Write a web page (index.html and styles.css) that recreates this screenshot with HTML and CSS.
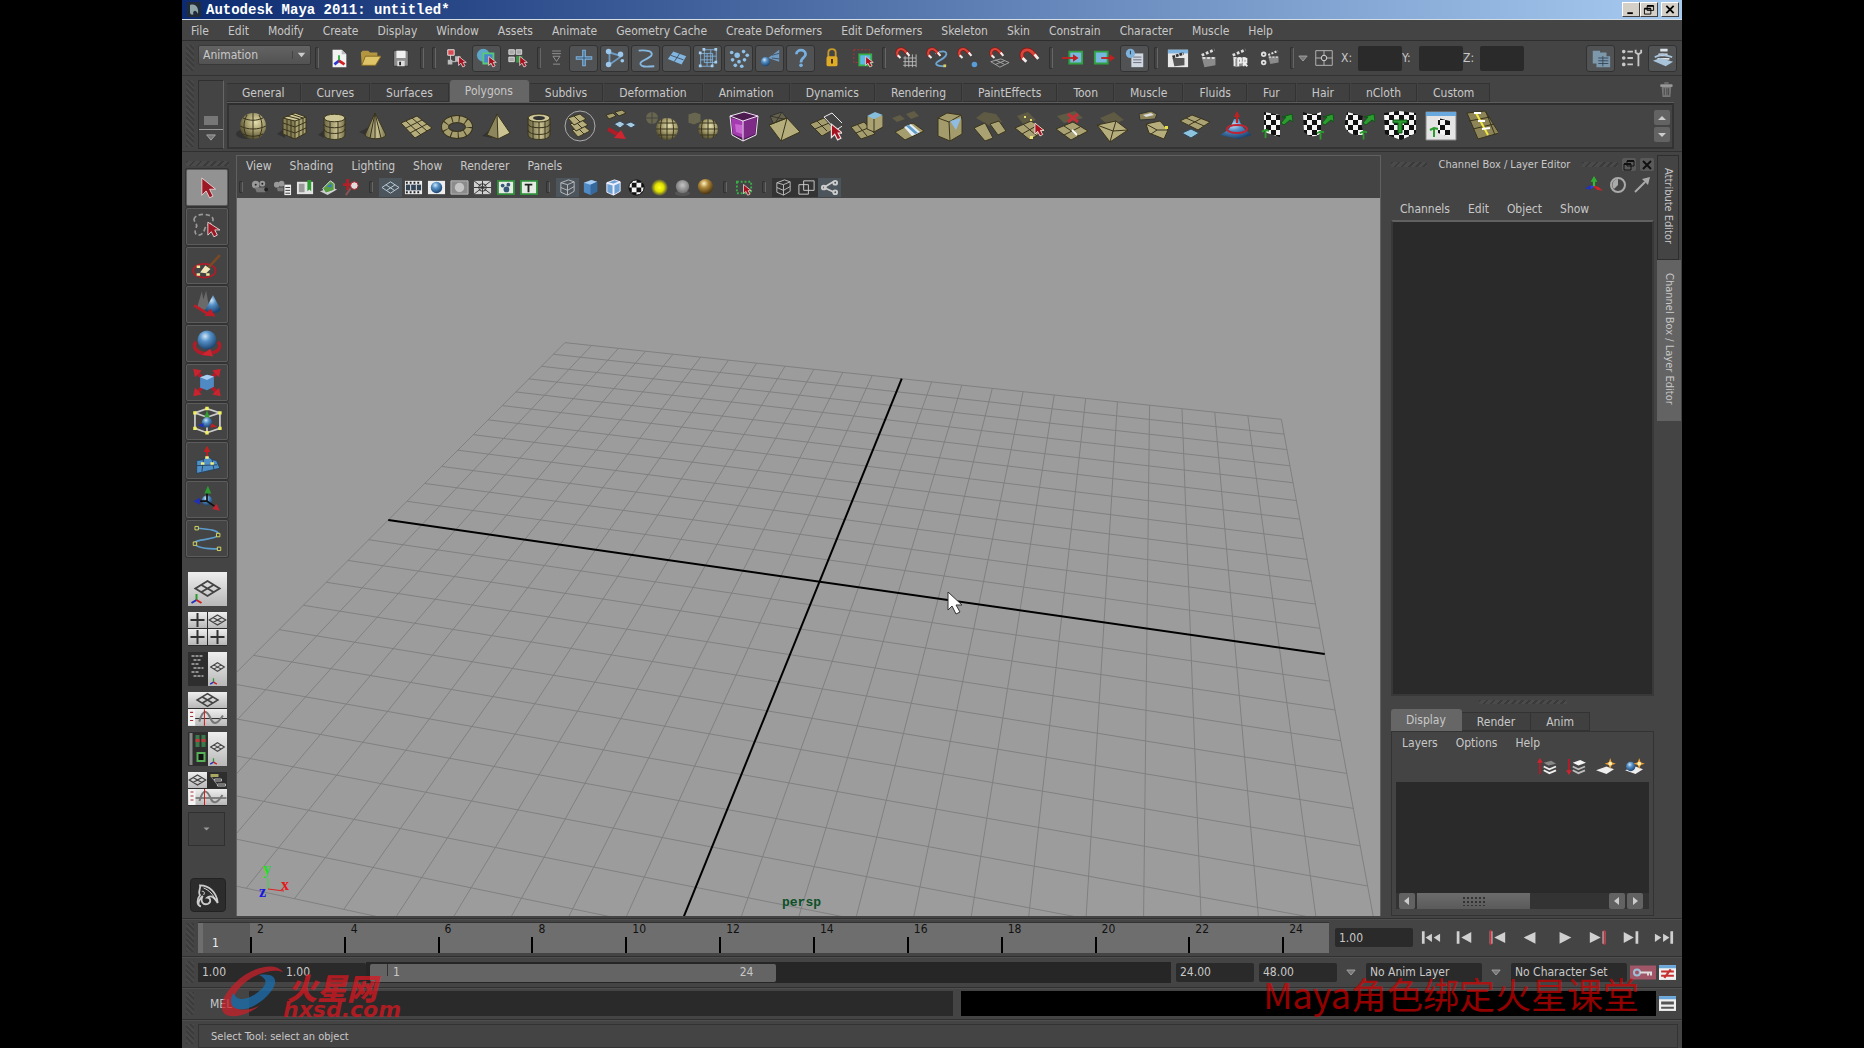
FILE: index.html
```html
<!DOCTYPE html>
<html lang="en">

<head>
    <meta charset="UTF-8">
    <meta name="viewport" content="width=device-width, initial-scale=1.0">
    <title>Autodesk Maya 2011: untitled*</title>
    <link rel="stylesheet" href="styles.css">
</head>

<body>
    <!-- Icon sprite -->
    <svg class="sprite" aria-hidden="true">
        <defs>
            <radialGradient id="gOlive" cx=".6" cy=".35" r=".7"><stop offset="0" stop-color="#e6dfb0"/><stop offset=".5" stop-color="#a39b6c"/><stop offset="1" stop-color="#4a4529"/></radialGradient>
            <linearGradient id="gOliveL"><stop offset="0" stop-color="#6d6745"/><stop offset=".6" stop-color="#c6be8e"/><stop offset="1" stop-color="#777049"/></linearGradient>
            <radialGradient id="gBlue" cx=".4" cy=".3" r=".7"><stop offset="0" stop-color="#cfe6f8"/><stop offset=".4" stop-color="#5590c6"/><stop offset="1" stop-color="#1d4470"/></radialGradient>
            <radialGradient id="gGrey" cx=".5" cy=".4" r=".6"><stop offset="0" stop-color="#c4c4c4"/><stop offset="1" stop-color="#707070"/></radialGradient>
            <radialGradient id="gGold" cx=".4" cy=".3" r=".7"><stop offset="0" stop-color="#fff3c0"/><stop offset=".4" stop-color="#b08a3c"/><stop offset="1" stop-color="#4b3510"/></radialGradient>
            <radialGradient id="gYellow"><stop offset="0" stop-color="#ffff20"/><stop offset=".5" stop-color="#e0e000"/><stop offset="1" stop-color="#e0e000" stop-opacity="0"/></radialGradient>
            <pattern id="checker" width="10" height="10" patternUnits="userSpaceOnUse"><rect width="10" height="10" fill="#f4f4f4"/><path d="M0 0h5v5h-5zM5 5h5v5h-5z" fill="#111"/></pattern>
        </defs>

        <symbol id="cursor" viewBox="0 0 12 16"><path d="M1 1v12l3-3 2.500 5 3-1.500-2.500-4.500h4z" fill="#a51220" stroke="#f0e0e0" stroke-width="1"/></symbol>
        <symbol id="star" viewBox="0 0 12 12"><path d="M6 0l1.500 4.500L12 6 7.500 7.500 6 12 4.500 7.500 0 6l4.500-1.500z" fill="#f0a030"/><circle cx="6" cy="6" r="2" fill="#fff0b0"/></symbol>
        <symbol id="magnet" viewBox="0 0 24 24"><path d="M5 14C1 8 4 3 9 3c4 0 6 3 10 8" fill="none" stroke="#8c1a14" stroke-width="5"/><path d="M5 14C1 8 4 3 9 3c4 0 6 3 10 8" fill="none" stroke="#d8453a" stroke-width="3"/><path d="M4 12l4 4M17 8l4 5" stroke="#eee" stroke-width="3"/></symbol>
        <symbol id="clap" viewBox="0 0 24 24"><path d="M4 11h15v9l-12 2z" fill="#8b8b8b"/><path d="M4 9l14-6" stroke="#ddd" stroke-width="3" stroke-dasharray="3 2"/><path d="M5 12h14" stroke="#ddd" stroke-width="2" stroke-dasharray="3 2"/></symbol>
        <symbol id="axis" viewBox="0 0 16 16"><path d="M8 9L3 11" stroke="#3040d0" stroke-width="2"/><path d="M8 9l5 3" stroke="#d02020" stroke-width="2"/><path d="M8 9V4" stroke="#30c030" stroke-width="2"/><path d="M0 11l5-3v4z" fill="#2030c0"/><path d="M16 13l-5-4-1 3z" fill="#d02828"/><path d="M8 0l3 5H5z" fill="#30b030"/></symbol>

        <!-- Status line -->
        <symbol id="new" viewBox="0 0 24 24"><path d="M5 3h10l5 5v14H5z" fill="#f2f2f2"/><path d="M15 3v5h5" fill="#bbb"/><path d="M12 16V9" stroke="#2cae3c" stroke-width="2"/><path d="M12 15l-5 4" stroke="#2a3cd0" stroke-width="3"/><path d="M12 15l6 4" stroke="#d02020" stroke-width="3"/></symbol>
        <symbol id="open" viewBox="0 0 24 24"><path d="M2 6l2-2h6l2 2h8v4H7L3 20z" fill="#b59640"/><path d="M7 10h17l-6 10H3z" fill="#e0c468" stroke="#8a6d20"/></symbol>
        <symbol id="save" viewBox="0 0 24 24"><path d="M4 4h16v17H4z" fill="#8d8d8d" stroke="#333"/><path d="M7 4h10v8H7z" fill="#f0f0f0"/><path d="M8 15h8v6H8z" fill="#ddd"/><path d="M10 16h2v4h-2z" fill="#222"/></symbol>
        <symbol id="selHier" viewBox="0 0 24 24"><path d="M6 8v8h6" fill="none" stroke="#ccc"/><path d="M3 3h7v6H3z" fill="#d84a52" stroke="#eee"/><path d="M3 14h5v5H3zM11 10h6v6h-6z" fill="#bbb"/><use href="#cursor" x="14" y="9" width="10" height="14"/></symbol>
        <symbol id="selObj" viewBox="0 0 24 24"><circle cx="8" cy="9" r="7" fill="#5da6c8"/><path d="M8 7h11v11H8z" fill="#4686c8" stroke="#58c878" stroke-width="2"/><use href="#cursor" x="13" y="9" width="10" height="14"/></symbol>
        <symbol id="selComp" viewBox="0 0 24 24"><path d="M2 3h6v5H2zM10 3h6v5h-6zM2 11h6v5H2z" fill="#aaa" stroke="#ddd"/><path d="M10 10h7v7h-7z" fill="#389a48"/><use href="#cursor" x="13" y="9" width="10" height="14"/></symbol>
        <symbol id="mask" viewBox="0 0 24 24"><path d="M7 4h10M7 7h10M8 10h8l-4 6zM8 19h8" fill="none" stroke="#999"/></symbol>
        <symbol id="plus" viewBox="0 0 24 24"><path d="M12 3v18M3 12h18" stroke="#7eb2dc" stroke-width="4"/><path d="M12 4v16M4 12h16" stroke="#35506a" stroke-width="1"/></symbol>
        <symbol id="joints" viewBox="0 0 24 24"><path d="M6 6v13M6 6l13 4-13 9" fill="none" stroke="#6d9cc2" stroke-width="2"/><g fill="#9cc8ec"><circle cx="5" cy="5" r="3"/><circle cx="5" cy="19" r="3"/><circle cx="18" cy="8" r="3"/><circle cx="20" cy="15" r="2"/></g></symbol>
        <symbol id="curve" viewBox="0 0 24 24"><path d="M4 4c9-1 16 1 14 5S4 15 6 19s8 2 15 2" fill="none" stroke="#86b8e0" stroke-width="2"/></symbol>
        <symbol id="surf" viewBox="0 0 24 24"><path d="M8 5l14 5-5 9L2 13z" fill="#82b6e0"/><path d="M5 9l14 5M15 7l-6 9" stroke="#3e4e5e" stroke-width="1"/></symbol>
        <symbol id="lattice" viewBox="0 0 24 24"><path d="M4 7h13v14H4zM8 3h13v14H8zM4 14h13M11 7v14M8 10h13M15 3v14" fill="none" stroke="#7fb0da"/><g fill="#a8d0f0"><path d="M2 5h3v3H2zM6 1h3v3H6zM19 1h3v3h-3zM2 19h3v3H2zM15 19h3v3h-3zM19 15h3v3h-3z"/></g></symbol>
        <symbol id="parts" viewBox="0 0 24 24"><g fill="#8fc0e8"><circle cx="4" cy="6" r="2"/><circle cx="10" cy="9" r="3"/><circle cx="17" cy="5" r="2"/><circle cx="21" cy="9" r="2"/><circle cx="5" cy="14" r="2"/><circle cx="12" cy="16" r="2"/><circle cx="18" cy="14" r="2"/><circle cx="8" cy="20" r="2"/><circle cx="15" cy="21" r="2"/></g></symbol>
        <symbol id="emit" viewBox="0 0 24 24"><path d="M10 12l12-9v13z" fill="#6f9cc4"/><path d="M14 9l8-2M14 12l8 1" stroke="#3e4e5e"/><circle cx="7" cy="16" r="5" fill="url(#gBlue)"/></symbol>
        <symbol id="what" viewBox="0 0 24 24"><path d="M7 8c0-6 10-6 10 0 0 4-5 3-5 9" fill="none" stroke="#78b0e0" stroke-width="3"/><circle cx="12" cy="20" r="2" fill="#78b0e0"/></symbol>
        <symbol id="lock" viewBox="0 0 24 24"><path d="M8 11V6c0-5 8-5 8 0v5" fill="none" stroke="#c79a2a" stroke-width="2"/><rect x="6" y="10" width="12" height="11" rx="2" fill="#e0ac28"/><path d="M12 13v5" stroke="#3a2a00" stroke-width="2"/></symbol>
        <symbol id="hilite" viewBox="0 0 24 24"><path d="M2 3h17v14H2z" fill="none" stroke="#c03030" stroke-dasharray="2 2"/><path d="M8 8h13v12H8z" fill="#5bb8e8" stroke="#38b048" stroke-width="2"/><use href="#cursor" x="14" y="9" width="10" height="14"/></symbol>
        <symbol id="snapGrid" viewBox="0 0 24 24"><path d="M9 12h14M9 16h14M9 20h14M11 10v12M15 8v14M19 8v14M23 8v14" stroke="#bbb"/><use href="#magnet" width="18" height="18"/></symbol>
        <symbol id="snapCurve" viewBox="0 0 24 24"><path d="M10 7c14-6 16 2 6 7s-3 7 4 7" fill="none" stroke="#6ea4d0" stroke-width="2"/><use href="#magnet" width="18" height="18"/><path d="M19 19h3v3h-3z" fill="#d8d060"/></symbol>
        <symbol id="snapPoint" viewBox="0 0 24 24"><use href="#magnet" width="18" height="18"/><circle cx="19" cy="19" r="3" fill="#5a9cd8"/></symbol>
        <symbol id="snapPlane" viewBox="0 0 24 24"><path d="M3 16l11-3 9 4-10 5zM8 14l10 5M18 15l-10 4" fill="none" stroke="#aaa"/><use href="#magnet" x="1" width="18" height="18"/></symbol>
        <symbol id="inConn" viewBox="0 0 24 24"><path d="M8 5h14v13H8z" fill="#76b8e0" stroke="#30a040" stroke-width="2"/><path d="M0 12h14" stroke="#c02020" stroke-width="2"/><path d="M12 8l6 4-6 4z" fill="#c02020"/></symbol>
        <symbol id="outConn" viewBox="0 0 24 24"><path d="M2 5h14v13H2z" fill="#76b8e0" stroke="#30a040" stroke-width="2"/><path d="M9 12h11" stroke="#c02020" stroke-width="2"/><path d="M18 8l6 4-6 4z" fill="#c02020"/></symbol>
        <symbol id="history" viewBox="0 0 24 24"><path d="M8 7h13v15H8z" fill="#cfd8e0"/><path d="M10 11h9M10 14h9M10 17h9" stroke="#667"/><circle cx="7" cy="7" r="5" fill="#7fb2dc"/><path d="M7 4v4" stroke="#234"/></symbol>
        <symbol id="renderView" viewBox="0 0 24 24"><path d="M1 3h22v19H1z" fill="#e8e8e8"/><path d="M1 3h22v4H1z" fill="#7fb4e0"/><path d="M6 12h13v8l-11 1z" fill="#555"/><path d="M6 11l12-4" stroke="#333" stroke-width="3" stroke-dasharray="3 1"/></symbol>
        <symbol id="ipr" viewBox="0 0 24 24"><use href="#clap" width="24" height="24"/><path d="M6 13v8M10 21v-8h3v4h-3M16 21v-8h3v4h-3l4 4" fill="none" stroke="#eee" stroke-width="2"/></symbol>
        <symbol id="rset" viewBox="0 0 24 24"><use href="#clap" x="6" width="18" height="22"/><g fill="none" stroke="#ddd" stroke-width="2"><circle cx="4" cy="8" r="2"/><circle cx="4" cy="17" r="2"/></g></symbol>
        <symbol id="absXf" viewBox="0 0 24 24"><path d="M3 4h18v16H3zM12 4v16M3 12h18" fill="none" stroke="#bbb" stroke-width="1"/><circle cx="12" cy="12" r="3" fill="#444" stroke="#ddd"/></symbol>
        <symbol id="attrEd" viewBox="0 0 24 24"><path d="M3 4h8v2h7v4h4v12H7v-4H3z" fill="#7d97ab"/><path d="M9 12h11M9 15h11M9 18h11M14 10v11" stroke="#34485a"/></symbol>
        <symbol id="toolSet" viewBox="0 0 24 24"><g fill="none" stroke="#c8c8c8" stroke-width="2"><circle cx="3" cy="5" r="1"/><circle cx="3" cy="12" r="1"/><circle cx="3" cy="19" r="1"/><path d="M7 5h6M7 12h6M7 19h6M16 3v3l3 2 3-2V3M19 8v13"/></g></symbol>
        <symbol id="chanBox" viewBox="0 0 24 24"><path d="M9 2h8v3H9zM7 7h10v3H7zM6 12h13v2H6z" fill="#dce4ea"/><path d="M1 15l8-3 14 4-8 5z" fill="#a9c4da"/><path d="M3 11l8-3 11 3" fill="none" stroke="#a9c4da" stroke-width="2"/></symbol>

        <!-- Shelf: polygons -->
        <symbol id="pSphere" viewBox="0 0 32 32"><ellipse cx="10" cy="24" rx="10" ry="5" fill="#333"/><circle cx="17" cy="16" r="13" fill="url(#gOlive)"/><path d="M4 16c8 4 18 4 26 0M7 8c7 3 13 3 20 0M7 24c7 3 13 3 20 0M17 3v26M11 5c-4 7-4 15 0 22M23 5c4 7 4 15 0 22" fill="none" stroke="#39341c"/></symbol>
        <symbol id="pCube" viewBox="0 0 32 32"><path d="M0 24l8-6v10z" fill="#333"/><path d="M6 8l12 3v18L6 24z" fill="#857e55"/><path d="M18 11l11-4v16l-11 6z" fill="#aaa271"/><path d="M6 8l12-5 11 4-11 4z" fill="#cfc898"/><path d="M6 8l12 3v18L6 24zM18 11l11-4v16l-11 6M6 8l12-5 11 4M10 9v17M14 10v18M6 13l12 4 11-5M6 19l12 4 11-5M22 9v18M26 8v17M10 6l12 3M14 4l12 4" fill="none" stroke="#39341c"/></symbol>
        <symbol id="pCyl" viewBox="0 0 32 32"><path d="M0 25l6-5v8z" fill="#333"/><path d="M6 8v17c0 6 21 6 21 0V8z" fill="url(#gOliveL)"/><ellipse cx="16.500" cy="8" rx="10.500" ry="4" fill="#cdc696"/><path d="M6 8v17c0 6 21 6 21 0V8M6 14c0 5 21 5 21 0M6 19c0 6 21 6 21 0M12 11v18M20 11v18M6 8c0 5 21 5 21 0s-21-5-21 0" fill="none" stroke="#39341c"/></symbol>
        <symbol id="pCone" viewBox="0 0 32 32"><path d="M0 22l12-6-4 10z" fill="#333"/><path d="M16 3L6 25c2 5 19 5 21 0z" fill="url(#gOliveL)" stroke="#39341c"/><path d="M16 3l-5 25M16 3v26M16 3l6 25" stroke="#39341c"/></symbol>
        <symbol id="pPlane" viewBox="0 0 32 32"><path d="M1 13l16-7 15 12-17 10z" fill="#b5ad7c" stroke="#39341c"/><path d="M6 18l16-8M10 23l17-9M6 11l15 14M12 8l15 13" stroke="#39341c"/></symbol>
        <symbol id="pTorus" viewBox="0 0 32 32"><ellipse cx="16" cy="17" rx="12" ry="8" fill="none" stroke="#39341c" stroke-width="8"/><ellipse cx="16" cy="17" rx="12" ry="8" fill="none" stroke="#a59d6e" stroke-width="6"/><ellipse cx="16" cy="17" rx="12" ry="8" fill="none" stroke="#39341c" stroke-width="7" stroke-dasharray="1 6"/></symbol>
        <symbol id="pPyr" viewBox="0 0 32 32"><path d="M0 26l10-8v10z" fill="#333"/><path d="M15 4L5 25l11 4z" fill="#8d865c"/><path d="M15 4l1 25 12-6z" fill="#cbc392"/><path d="M15 4L5 25l11 4 12-6zl1 25" fill="none" stroke="#39341c"/></symbol>
        <symbol id="pPipe" viewBox="0 0 32 32"><path d="M5 8v17c0 6 22 6 22 0V8z" fill="url(#gOliveL)"/><ellipse cx="16" cy="8" rx="11" ry="4" fill="#cdc696" stroke="#39341c"/><ellipse cx="16" cy="8" rx="6" ry="2" fill="#333"/><path d="M5 8v17c0 6 22 6 22 0V8M5 14c0 5 22 5 22 0M5 20c0 6 22 6 22 0M10 11v18M16 12v17M22 11v17" fill="none" stroke="#39341c"/></symbol>
        <symbol id="pStack" viewBox="0 0 32 32"><circle cx="16" cy="16" r="15" fill="none" stroke="#aaa"/><g fill="#b5ad7c" stroke="#39341c"><path d="M8 20l12-4 6 5-12 6zM14 18l6 6"/><path d="M6 14l12-4 6 5-12 6zM12 12l6 6"/><path d="M4 8l12-4 6 5-12 6zM10 6l6 6"/></g></symbol>
        <symbol id="pExtract" viewBox="0 0 32 32"><path d="M1 5l7-2 3 3-7 3zM10 2l7-2 4 3-7 3z" fill="#a59d6e" stroke="#39341c"/><path d="M9 14l6-3 5 3-5 4zM20 14l6-2 5 3-5 3z" fill="#a6cbe0" stroke="#345"/><path d="M3 19l11 6" stroke="#b01c28" stroke-width="4"/><path d="M21 29l-12-1 7-8z" fill="#d02430"/></symbol>
        <symbol id="pSmooth" viewBox="0 0 32 32"><circle cx="6" cy="8" r="6" fill="#68664f"/><path d="M6 2v12M0 8h12" stroke="#444"/><circle cx="21" cy="19" r="11" fill="url(#gOlive)"/><path d="M10 19h22M12 13h18M12 25h18M21 8v22M16 9c-2 7-2 14 0 20M26 9c2 7 2 14 0 20" fill="none" stroke="#39341c"/></symbol>
        <symbol id="pCubeSmooth" viewBox="0 0 32 32"><path d="M1 4l7-2 6 2v8l-7 3-6-2z" fill="#68664f" stroke="#444"/><circle cx="21" cy="19" r="10" fill="url(#gOlive)"/><path d="M11 19h20M13 13h17M13 25h17M21 9v20M16 10c-2 6-2 12 0 18M26 10c2 6 2 12 0 18" fill="none" stroke="#39341c"/></symbol>
        <symbol id="pPurple" viewBox="0 0 32 32"><path d="M3 6l16-4 11 3-2 20-13 5L4 24z" fill="#4c1b50"/><path d="M3 8l12 3v17L5 24z" fill="#a43bb0"/><path d="M15 11l14-5-2 18-12 5z" fill="#7e2b88"/><path d="M7 14l7 1v9l-6-2z" fill="#c865d0"/><path d="M2 6l14-4 14 4-2 19-13 6L4 25zM2 6l13 5 15-5M15 11v20" fill="none" stroke="#f0e6f2"/></symbol>
        <symbol id="pTri" viewBox="0 0 32 32"><path d="M1 6l12-4 6 8-14 5z" fill="#66624a" stroke="#333"/><path d="M1 6l18 4M13 2l-8 13" stroke="#333"/><path d="M0 15l18-7 13 14-19 9z" fill="#b5ad7c" stroke="#39341c"/><path d="M18 8l-6 23M0 15l18-7" fill="none" stroke="#39341c"/></symbol>
        <symbol id="pCreate" viewBox="0 0 32 32"><path d="M0 14l14-6 10 11-12 7z" fill="#a59d6e" stroke="#39341c"/><path d="M5 19l14-6M7 11l10 10" stroke="#39341c"/><path d="M14 7l8-4 12 12-8 5z" fill="none" stroke="#eee" stroke-width="1"/><use href="#cursor" x="20" y="13" width="14" height="18"/></symbol>
        <symbol id="pExtrude" viewBox="0 0 32 32"><path d="M0 17l13-5 11 12-14 5z" fill="#a59d6e" stroke="#39341c"/><path d="M6 14l10 12M5 23l12-5" stroke="#39341c"/><path d="M16 6v13l7 3 9-5V5z" fill="#aaa272" stroke="#39341c"/><path d="M16 6l8-4 8 3-9 4z" fill="#86bcdc"/><path d="M23 9v13" stroke="#39341c"/></symbol>
        <symbol id="pBridge" viewBox="0 0 32 32"><path d="M0 8l8-3 5 4-8 3zM14 4l8-3 5 5-8 3z" fill="#605c46"/><path d="M3 22l18-9 11 8-19 9z" fill="#a59d6e" stroke="#39341c"/><path d="M12 17l7-3 9 8-8 4z" fill="#e4eef6"/><path d="M14 16l3-1 9 8-3 1z" fill="#5f9cc8"/></symbol>
        <symbol id="pBevel" viewBox="0 0 32 32"><path d="M5 8l9-5 14 2 1 5v14l-12 7L5 26z" fill="#a39b6b" stroke="#39341c"/><path d="M5 8l11 4 1 19M16 12l12-7" fill="none" stroke="#39341c"/><path d="M17 11l11-3-5 12z" fill="#8fbce0"/></symbol>
        <symbol id="pMerge" viewBox="0 0 32 32"><path d="M2 8l8-6 12 2 6 8-12 4z" fill="#5e5a44"/><path d="M0 18l11-5 8 15-8 3zM16 14l9-3 7 10-8 4z" fill="#aaa273" stroke="#39341c"/></symbol>
        <symbol id="pSplit" viewBox="0 0 32 32"><path d="M2 6l11-4 8 8-12 5z" fill="#5e5a44"/><path d="M0 18l16-7 14 9-15 10z" fill="#aaa273" stroke="#39341c"/><path d="M8 14l14 12M7 24l16-9" stroke="#39341c"/><g fill="#e8e070"><path d="M9 6h2v2H9zM15 9h2v2h-2zM15 26h3v3h-3z"/></g><use href="#cursor" x="19" y="12" width="11" height="15"/></symbol>
        <symbol id="pDelEdge" viewBox="0 0 32 32"><path d="M1 6l18-5 8 7-19 5z" fill="#5e5a44"/><path d="M12 4l10 8M22 4l-10 8" stroke="#c03038" stroke-width="3"/><path d="M0 19l17-7 15 9-17 9z" fill="#aaa273" stroke="#39341c"/><path d="M8 25l16-8M8 16l15 10" stroke="#39341c"/><path d="M16 20l5 5" stroke="#fff" stroke-width="2"/></symbol>
        <symbol id="pPoke" viewBox="0 0 32 32"><path d="M3 8l14-6 10 8-15 6z" fill="#5e5a44"/><path d="M0 15l19-4 12 9-18 12z" fill="#b5ad7c" stroke="#39341c"/><path d="M0 15l16 6 15-1M19 11l-3 10-3 11" fill="none" stroke="#39341c"/></symbol>
        <symbol id="pWedge" viewBox="0 0 32 32"><path d="M1 4l12-3 6 3-2 5-15 1z" fill="#8d8558" stroke="#333"/><path d="M5 5l8-2 3 2-8 2z" fill="#ddd"/><path d="M8 14l14-3 8 9-4 9-15-6z" fill="#b5ad7c" stroke="#39341c"/><path d="M8 14l11 6 11 0M19 20l-6 4" fill="none" stroke="#39341c"/><path d="M27 16h3v3h-3z" fill="#e8e040"/></symbol>
        <symbol id="pDup" viewBox="0 0 32 32"><path d="M1 11l12-6 18 7-12 8z" fill="#aaa273" stroke="#39341c"/><path d="M7 8l18 8M10 15l13-7" stroke="#39341c"/><path d="M3 23l9-4 8 4-8 5z" fill="#8cc4e0" stroke="#345"/></symbol>
        <symbol id="pSoft" viewBox="0 0 32 32"><path d="M0 25c6-4 10-4 14-16h5c3 10 8 12 13 16l-14 4z" fill="url(#gBlue)"/><ellipse cx="17" cy="19" rx="10" ry="4" fill="none" stroke="#c02434" stroke-width="2"/><path d="M17 13V5" stroke="#c02020" stroke-width="2"/><path d="M17 1l3 6h-6z" fill="#c02020"/></symbol>
        <symbol id="uvArrow" viewBox="0 0 32 32"><path d="M20 13l5-6h-4l10-3 1 8-3-2-6 5z" fill="#2c9c30" stroke="#0e5514" stroke-width="1"/></symbol>
        <symbol id="uvT" viewBox="0 0 10 10"><path d="M1 3l4-2 4 1M5 1v9" fill="none" stroke="#2c9c30" stroke-width="2"/></symbol>
        <symbol id="uvPlanar" viewBox="0 0 32 32"><path d="M3 2l16 3v22L3 22z" fill="url(#checker)"/><use href="#uvArrow" width="32" height="32"/><use href="#uvT" x="0" y="19" width="9" height="9"/></symbol>
        <symbol id="uvCyl" viewBox="0 0 32 32"><path d="M1 2c8 3 10 3 18 0v21c-6 5-12 4-17-1z" fill="url(#checker)"/><use href="#uvArrow" width="32" height="32"/><use href="#uvT" x="14" y="20" width="9" height="10"/></symbol>
        <symbol id="uvSph" viewBox="0 0 32 32"><path d="M4 2l16 4c-2 7-2 12 2 18-10 4-22-2-20-12z" fill="url(#checker)"/><use href="#uvArrow" width="32" height="32"/><use href="#uvT" x="16" y="20" width="9" height="10"/></symbol>
        <symbol id="uvAuto" viewBox="0 0 32 32"><path d="M0 3l15-2 17 2v20l-15 7L1 24z" fill="url(#checker)"/><path d="M9 10h14v3h-5v10h-4V13H9z" fill="#2c9c30" stroke="#0e5514"/></symbol>
        <symbol id="uvEditor" viewBox="0 0 32 32"><path d="M1 2h30v28H1z" fill="#e4e4e4" stroke="#888"/><path d="M1 2h30v4H1z" fill="#69a8dc"/><path d="M13 8l12 3v16l-12-4z" fill="url(#checker)"/><use href="#uvT" x="4" y="17" width="10" height="10"/></symbol>
        <symbol id="uvRoad" viewBox="0 0 32 32"><path d="M1 3l18-2 14 22-21 6z" fill="#8d8558" stroke="#39341c"/><path d="M3 11l21-4M7 19l21-5M20 2l9 23" stroke="#39341c"/><path d="M10 3l12 22" stroke="#f0e840" stroke-width="2"/><path d="M8 3h7M12 11h7M16 19l8-1" stroke="#fff" stroke-width="2"/></symbol>
        <symbol id="trash" viewBox="0 0 16 18"><path d="M3 5h11l-1 12H4z" fill="#777"/><path d="M2 3h13v2H2zM6 1h5" stroke="#999" fill="#999"/><path d="M6 7v8M9 7v8M11 7v8" stroke="#444"/></symbol>

        <!-- Panel toolbar -->
        <symbol id="cam" viewBox="0 0 20 20"><circle cx="6" cy="7" r="4" fill="#999"/><circle cx="13" cy="6" r="3" fill="#999"/><path d="M5 10h11v5H7z" fill="#777"/><circle cx="6" cy="7" r="1" fill="#222"/><circle cx="13" cy="6" r="1" fill="#222"/><circle cx="17" cy="12" r="2" fill="#222"/></symbol>
        <symbol id="camAttr" viewBox="0 0 20 20"><circle cx="4" cy="7" r="3" fill="#999"/><circle cx="9" cy="6" r="3" fill="#999"/><path d="M4 10h7v4H5z" fill="#777"/><path d="M12 7h7v11h-7z" fill="#eee"/><path d="M13 10h5M13 13h5M13 16h5" stroke="#333"/></symbol>
        <symbol id="book" viewBox="0 0 20 20"><path d="M1 4h17v13H1z" fill="#e4e4e4"/><path d="M3 6h6v9H3z" fill="#999"/><path d="M12 2h4v12l-2-2-2 2z" fill="#2c9c30"/></symbol>
        <symbol id="imgPlane" viewBox="0 0 20 20"><path d="M1 14l12-4 6 2-10 6z" fill="#ccc"/><path d="M4 11l8-8 4 3v7l-9 3z" fill="#5a9c40" stroke="#dde"/><path d="M8 9l5-3v4z" fill="#37c"/></symbol>
        <symbol id="panZoom" viewBox="0 0 20 20"><path d="M6 1v12M1 7h12" stroke="#b02028" stroke-width="3"/><circle cx="13" cy="8" r="4" fill="#ddd" stroke="#b02028"/><path d="M9 11l-5 7" stroke="#855" stroke-width="2"/></symbol>
        <symbol id="gridIc" viewBox="0 0 20 20"><path d="M10 4l9 6-9 6-9-6zM5 7l9 6M15 7l-9 6" fill="none" stroke="#bcd0e0" stroke-width="1"/></symbol>
        <symbol id="film" viewBox="0 0 20 20"><path d="M1 3h18v14H1z" fill="#eee"/><path d="M2 7h16v6H2z" fill="#345"/><path d="M2 5h16M2 15h16" stroke="#222" stroke-width="2" stroke-dasharray="2 2"/><path d="M7 7v6M13 7v6" stroke="#eee"/></symbol>
        <symbol id="resGate" viewBox="0 0 20 20"><path d="M1 3h18v14H1z" fill="#eee"/><circle cx="10" cy="10" r="6" fill="url(#gBlue)"/></symbol>
        <symbol id="gateMask" viewBox="0 0 20 20"><path d="M1 3h18v14H1z" fill="#8c8c8c" stroke="#bbb"/><circle cx="10" cy="10" r="5" fill="#c4c4c4"/></symbol>
        <symbol id="fieldCh" viewBox="0 0 20 20"><path d="M1 3h18v14H1z" fill="#d0d0d0"/><path d="M1 3l18 14M19 3L1 17M10 3v14M1 10h18" stroke="#333"/><circle cx="10" cy="10" r="4" fill="none" stroke="#333"/></symbol>
        <symbol id="safeAct" viewBox="0 0 20 20"><path d="M2 3h17v14H2z" fill="#e4ece4" stroke="#2f8c3a" stroke-width="2"/><g fill="#357"><circle cx="7" cy="8" r="2"/><circle cx="13" cy="7" r="2"/><circle cx="11" cy="12" r="3"/></g></symbol>
        <symbol id="safeTitle" viewBox="0 0 20 20"><path d="M2 3h17v14H2z" fill="#e4ece4" stroke="#2f8c3a" stroke-width="2"/><path d="M6 6h8v2h-3v7H9V8H6z" fill="#222"/></symbol>
        <symbol id="wire" viewBox="0 0 20 20"><path d="M3 5l8-3 6 2v10l-7 4-7-3zM3 5l7 2 7-3M10 7v11M3 10l7 3 7-4" fill="none" stroke="#bbb"/></symbol>
        <symbol id="shade" viewBox="0 0 20 20"><path d="M3 5l8-3 6 2v10l-7 4-7-3z" fill="#4f8ac4"/><path d="M3 5l8-3 6 2-7 3z" fill="#a8cdf0"/><path d="M10 7v11l7-4V4z" fill="#35689c"/></symbol>
        <symbol id="shadeWire" viewBox="0 0 20 20"><path d="M3 5l8-3 6 2v10l-7 4-7-3z" fill="#6ea2d4" stroke="#eef"/><path d="M3 5l7 2 7-3M10 7v11" fill="none" stroke="#eef" stroke-width="2"/></symbol>
        <symbol id="texd" viewBox="0 0 20 20"><circle cx="10" cy="10" r="8" fill="url(#checker)" stroke="#111"/></symbol>
        <symbol id="light" viewBox="0 0 20 20"><circle cx="10" cy="10" r="9" fill="url(#gYellow)"/></symbol>
        <symbol id="shadow" viewBox="0 0 20 20"><ellipse cx="10" cy="16" rx="8" ry="3" fill="#555"/><circle cx="10" cy="9" r="7" fill="url(#gGrey)"/></symbol>
        <symbol id="hq" viewBox="0 0 20 20"><circle cx="10" cy="9" r="8" fill="url(#gGold)"/></symbol>
        <symbol id="isolate" viewBox="0 0 20 20"><path d="M2 4h15v12H2z" fill="none" stroke="#38b048" stroke-width="2" stroke-dasharray="2 2"/><use href="#cursor" x="8" y="6" width="10" height="13"/></symbol>
        <symbol id="xray" viewBox="0 0 20 20"><path d="M2 7h10v10H2zM7 3h11v10H7z" fill="none" stroke="#ccc"/></symbol>
        <symbol id="xjoint" viewBox="0 0 20 20"><path d="M4 10l10-6M4 10l11 5" stroke="#ccc" stroke-width="2"/><g fill="none" stroke="#ccc" stroke-width="2"><circle cx="4" cy="10" r="2"/><circle cx="16" cy="5" r="2"/><circle cx="16" cy="15" r="2"/></g></symbol>

        <!-- Toolbox -->
        <symbol id="tSelect" viewBox="0 0 36 36"><path d="M12 7v20l5-5 4 8 4-2-4-8h7z" fill="#9c1824" stroke="#ecdcdc" stroke-width="1"/></symbol>
        <symbol id="tLasso" viewBox="0 0 36 36"><path d="M3 10c0-8 22-8 22 0 0 6-8 4-10 12-2 8-14 9-10-2 3-5-1-5-2-10z" fill="none" stroke="#999" stroke-width="2" stroke-dasharray="5 3"/><path d="M19 13v15l4-4 3 6 4-2-3-6h6z" fill="#9c1824" stroke="#ecdcdc"/></symbol>
        <symbol id="tPaint" viewBox="0 0 36 36"><ellipse cx="15" cy="24" rx="13" ry="8" fill="none" stroke="#b01c28" stroke-width="2"/><path d="M20 20L33 6" stroke="#7a4a24" stroke-width="3"/><path d="M10 26l6-8 6 4-5 5z" fill="#f0e6b8"/><path d="M6 18h4v3H6zM6 27h4v3H6zM17 27h4v3h-4z" fill="#f0e69a"/></symbol>
        <symbol id="tMove" viewBox="0 0 36 36"><path d="M12 3L6 23h10zM17 2l-7 22h11z" fill="#6a6a6a"/><path d="M25 7l-9 17c3 5 16 5 18 0z" fill="url(#gBlue)"/><path d="M3 19l18 11" stroke="#c01c28" stroke-width="3"/><path d="M28 32l-13-1 7-8z" fill="#c01c28"/></symbol>
        <symbol id="tRotate" viewBox="0 0 36 36"><path d="M5 16c-5 8 3 14 14 14M31 16c4 6 1 11-7 13" fill="none" stroke="#b01c28" stroke-width="4"/><circle cx="18" cy="14" r="11" fill="url(#gBlue)"/><path d="M12 31l10-7 3 9z" fill="#d02430"/></symbol>
        <symbol id="tScale" viewBox="0 0 36 36"><path d="M6 6l24 24M30 6L6 30" stroke="#b01c28" stroke-width="4"/><path d="M2 2l10 2-8 8zM34 2l-10 2 8 8zM2 34l10-2-8-8zM34 34l-10-2 8-8z" fill="#c82430"/><path d="M10 12l8-3 8 2v12l-8 4-8-3z" fill="#4f8ac4"/><path d="M10 12l8-3 8 2-8 4z" fill="#a8cdf0"/></symbol>
        <symbol id="tUniv" viewBox="0 0 36 36"><path d="M4 8l14-5 15 5v18l-15 5-14-5zM4 8l14 5 15-5M18 13v18" fill="none" stroke="#ccc" stroke-width="2"/><circle cx="18" cy="19" r="6" fill="url(#gBlue)"/><path d="M18 5l3 8h-6z" fill="#30a030"/><path d="M7 22l7-2v5z" fill="#2030c0"/><path d="M30 24l-7-4-1 5z" fill="#c02020"/><g fill="#f0f060"><path d="M2 6h4v4H2zM31 6h4v4h-4zM2 24h4v4H2zM31 24h4v4h-4zM16 1h4v4h-4zM16 29h4v4h-4z"/></g></symbol>
        <symbol id="tSoft" viewBox="0 0 36 36"><path d="M6 18l8-1 4-5 6 5 5 1 4 9-27 6z" fill="#4f8fc8" stroke="#243c54"/><path d="M6 24l24-1M14 17l-2 14M24 17l2 11" stroke="#243c54"/><path d="M18 14V5" stroke="#c02020" stroke-width="2"/><path d="M18 1l4 7h-8z" fill="#c02020"/><path d="M16 13h4v3h-4zM11 20h4v3h-4zM22 20h4v3h-4z" fill="#f0f080"/></symbol>
        <symbol id="tManip" viewBox="0 0 36 36"><circle cx="18" cy="19" r="6" fill="url(#gBlue)"/><path d="M18 20V8M18 20L6 20M18 20l9 6" stroke="#111" stroke-width="2"/><path d="M19 2l4 9h-8z" fill="#2c9c30"/><path d="M2 20l8-4v8z" fill="#2030b0"/><path d="M33 31l-9-2 5-6z" fill="#c02430"/></symbol>
        <symbol id="tCurve" viewBox="0 0 36 36"><path d="M6 6c12 1 27 2 25 8S2 18 4 24s20 6 28 6" fill="none" stroke="#5c9ccc" stroke-width="2"/><path d="M4 4h4v4H4zM29 12h4v4h-4zM2 22h4v4H2zM30 28h4v4h-4z" fill="#444" stroke="#e8e860" stroke-width="1"/></symbol>
        <symbol id="lyGrid" viewBox="0 0 30 20"><path d="M15 2l13 8-13 8L2 10zM8 6l14 8M22 6L8 14" fill="none" stroke="#444" stroke-width="2"/></symbol>
        <symbol id="lyAxis" viewBox="0 0 12 10"><path d="M6 6V0" stroke="#2c9c30" stroke-width="2"/><path d="M6 6l-5 3" stroke="#2030c0" stroke-width="2"/><path d="M6 6l5 3" stroke="#d02020" stroke-width="2"/></symbol>
        <symbol id="lyBig" viewBox="0 0 38 34"><use href="#lyGrid" x="5" y="7" width="28" height="19"/><use href="#lyAxis" x="2" y="22" width="12" height="10"/></symbol>
        <symbol id="lyCross" viewBox="0 0 18 16"><path d="M9 1v14M2 8h14" stroke="#333" stroke-width="2"/></symbol>
        <symbol id="lyTall" viewBox="0 0 18 34"><use href="#lyGrid" x="1" y="9" width="16" height="12"/><use href="#lyAxis" x="1" y="26" width="8" height="7"/></symbol>
        <symbol id="lyOut" viewBox="0 0 18 34"><path d="M3 4h12M5 8h7M3 12h8M5 16h10M3 20h8M5 24h10" stroke="#eee" stroke-dasharray="3 1"/></symbol>
        <symbol id="lyGraph" viewBox="0 0 38 16"><path d="M0 0h7v16H0z" fill="#f4f4f4"/><path d="M2 3h3M2 7h3M2 11h3" stroke="#a33"/><path d="M7 9h31" stroke="#333"/><path d="M11 12c4-14 8-10 11-3s7 5 12-3" fill="none" stroke="#777" stroke-width="2"/><path d="M16 0v16" stroke="#d02020"/></symbol>
        <symbol id="lyHyper" viewBox="0 0 18 34"><path d="M1 1h3v32H1z" fill="#888"/><path d="M7 3h4v12H7zM13 3h4v12h-4z" fill="#39794a"/><path d="M7 7h4v3H7zM13 7h4v3h-4z" fill="#c03838"/><path d="M9 21h7v8H9z" fill="#111" stroke="#58b058" stroke-width="2"/></symbol>
        <symbol id="lyNodes" viewBox="0 0 18 16"><path d="M2 2h8v3H2z" fill="#a8a860"/><path d="M6 7h7v2H6zM9 12h8v2H9z" fill="none" stroke="#bbb"/><path d="M3 5l6 8" stroke="#888"/></symbol>
        <symbol id="mayaLogo" viewBox="0 0 34 30"><path d="M8 4c10 0 19 8 20 20-5-8-9-9-12-6 4 0 5 5 1 7-6 2-9-3-6-9-6 6-6 11-2 12-5-1-5-8-1-13-3-3 1-7 0-11z" fill="none" stroke="#ccc" stroke-width="2"/><path d="M12 7c7 3 11 8 13 13M10 11c2-1 4 1 2 4" fill="none" stroke="#eee"/></symbol>

        <!-- Layer editor and playback -->
        <symbol id="layUp" viewBox="0 0 22 18"><path d="M3 17V3" stroke="#b01c28" stroke-width="2"/><path d="M3 0l3 5H0z" fill="#d02430"/><path d="M7 5l8-2 5 3-8 2z" fill="#888"/><path d="M7 9l6 3 7-3M7 13l6 3 7-3" fill="none" stroke="#eee" stroke-width="2"/></symbol>
        <symbol id="layDown" viewBox="0 0 22 18"><path d="M3 1v14" stroke="#b01c28" stroke-width="2"/><path d="M3 18l3-5H0z" fill="#d02430"/><path d="M7 5l8-3 6 3-8 3z" fill="#f4f4f4"/><path d="M7 9l6 3 7-3M7 13l6 3 7-3" fill="none" stroke="#bbb" stroke-width="2"/></symbol>
        <symbol id="layNew" viewBox="0 0 22 18"><path d="M1 13l11-4 8 3-8 5z" fill="#eee"/><use href="#star" x="10" y="0" width="12" height="12"/></symbol>
        <symbol id="layObj" viewBox="0 0 22 18"><path d="M1 13l11-4 8 3-8 5z" fill="#eee"/><circle cx="7" cy="9" r="5" fill="url(#gBlue)"/><use href="#star" x="10" y="0" width="12" height="12"/></symbol>
        <symbol id="toStart" viewBox="0 0 22 16"><path d="M1 1h3v14H1zM12 4v9L5 8zM21 4v9l-7-5z" fill="#d0d0d0"/></symbol>
        <symbol id="stepBack" viewBox="0 0 22 16"><path d="M3 1h3v14H3zM19 2v12L8 8z" fill="#d0d0d0"/></symbol>
        <symbol id="keyBack" viewBox="0 0 22 16"><path d="M3 1h3v14H3zM20 2v12L8 8z" fill="#d0d0d0"/><path d="M4 0v16" stroke="#c83040" stroke-width="2"/></symbol>
        <symbol id="playBack" viewBox="0 0 22 16"><path d="M17 2v13L4 8z" fill="#d0d0d0"/></symbol>
        <symbol id="keyMark" viewBox="0 0 26 14"><rect x="0" y="0" width="26" height="14" fill="#a05666"/><circle cx="7" cy="7" r="3" fill="none" stroke="#9cc0d8" stroke-width="2"/><path d="M10 7h12M18 7v3M21 7v3" stroke="#ddd" stroke-width="2"/></symbol>
        <symbol id="prefs" viewBox="0 0 16 14"><path d="M0 0h16v14H0z" fill="#f0f0f0"/><path d="M0 0h16v3H0z" fill="#6aa6d8"/><path d="M2 6h12M2 10h12M11 4l-6 8" stroke="#c83030" stroke-width="2"/></symbol>
        <symbol id="script" viewBox="0 0 16 14"><path d="M0 0h16v14H0z" fill="#f0f0f0"/><path d="M0 0h16v3H0z" fill="#6aa6d8"/><path d="M2 5h12v3H2zM2 10h12v2H2z" fill="#555"/></symbol>
        <symbol id="restore" viewBox="0 0 12 12"><path d="M4 2h7v5H4zM1 5h7v6H1z" fill="none" stroke="currentColor" stroke-width="1"/><path d="M4 2h7M1 5h7" stroke="currentColor" stroke-width="2"/></symbol>
        <symbol id="close" viewBox="0 0 12 12"><path d="M2 2l8 8M10 2l-8 8" stroke="currentColor" stroke-width="2"/></symbol>
        <symbol id="tri" viewBox="0 0 12 8"><path d="M1 1h10L6 7z" fill="#777" stroke="#aaa"/></symbol>
        <symbol id="half" viewBox="0 0 18 18"><circle cx="9" cy="9" r="7" fill="#444" stroke="#aaa" stroke-width="2"/><path d="M9 3v6l-4 4a6 6 0 0 1 4-10z" fill="#aaa"/></symbol>
        <symbol id="slant" viewBox="0 0 18 18"><path d="M2 16L12 6" stroke="#aaa" stroke-width="2"/><path d="M17 1l-2 8-6-6z" fill="#aaa"/></symbol>
    </svg>

    <div class="app">
        <header class="title-bar">
            <svg class="app-icon" viewBox="0 0 14 15"><rect width="14" height="15" fill="#222c38"/><path d="M3 3c6-2 9 3 8 9-2-4-4-4-5-1 2 2-3 3-3-1z" fill="#8fa6a8"/></svg>
            <span class="title-text">Autodesk Maya 2011: untitled*</span>
            <div class="win-buttons">
                <button aria-label="Minimize"><svg viewBox="0 0 12 12"><path d="M2 10h6" stroke="#000" stroke-width="2"/></svg></button>
                <button aria-label="Restore"><svg><use href="#restore"/></svg></button>
                <button class="win-close" aria-label="Close"><svg><use href="#close"/></svg></button>
            </div>
        </header>

        <nav class="menu main-menu">
            <a href="#">File</a><a href="#">Edit</a><a href="#">Modify</a><a href="#">Create</a><a href="#">Display</a><a href="#">Window</a><a href="#">Assets</a><a href="#">Animate</a><a href="#">Geometry Cache</a><a href="#">Create Deformers</a><a href="#">Edit Deformers</a><a href="#">Skeleton</a><a href="#">Skin</a><a href="#">Constrain</a><a href="#">Character</a><a href="#">Muscle</a><a href="#">Help</a>
        </nav>

        <!-- Status line -->
        <div class="status-line">
            <span class="grip"></span>
            <div class="combo">
                <select aria-label="Menu set"><option>Animation</option></select>
                <svg viewBox="0 0 12 8"><path d="M1 1h10L6 7z" fill="#ccc"/></svg>
            </div>
            <span class="sep"></span>
            <button aria-label="New scene"><svg><use href="#new"/></svg></button>
            <button aria-label="Open scene"><svg><use href="#open"/></svg></button>
            <button aria-label="Save scene"><svg><use href="#save"/></svg></button>
            <span class="sep"></span>
            <span class="sep"></span>
            <button aria-label="Select by hierarchy"><svg><use href="#selHier"/></svg></button>
            <button class="on" aria-label="Select by object type"><svg><use href="#selObj"/></svg></button>
            <button aria-label="Select by component type"><svg><use href="#selComp"/></svg></button>
            <span class="sep"></span>
            <button class="narrow" aria-label="Selection mask"><svg><use href="#mask"/></svg></button>
            <button class="on" aria-label="Handles"><svg><use href="#plus"/></svg></button>
            <button class="on" aria-label="Joints"><svg><use href="#joints"/></svg></button>
            <button class="on" aria-label="Curves"><svg><use href="#curve"/></svg></button>
            <button class="on" aria-label="Surfaces"><svg><use href="#surf"/></svg></button>
            <button class="on" aria-label="Deformations"><svg><use href="#lattice"/></svg></button>
            <button class="on" aria-label="Dynamics"><svg><use href="#parts"/></svg></button>
            <button class="on" aria-label="Rendering"><svg><use href="#emit"/></svg></button>
            <button class="on" aria-label="Miscellaneous"><svg><use href="#what"/></svg></button>
            <button aria-label="Lock selection"><svg><use href="#lock"/></svg></button>
            <button aria-label="Highlight selection"><svg><use href="#hilite"/></svg></button>
            <span class="sep"></span>
            <button aria-label="Snap to grids"><svg><use href="#snapGrid"/></svg></button>
            <button aria-label="Snap to curves"><svg><use href="#snapCurve"/></svg></button>
            <button aria-label="Snap to points"><svg><use href="#snapPoint"/></svg></button>
            <button aria-label="Snap to view planes"><svg><use href="#snapPlane"/></svg></button>
            <button aria-label="Make live"><svg><use href="#magnet"/></svg></button>
            <span class="sep"></span>
            <button aria-label="Inputs"><svg><use href="#inConn"/></svg></button>
            <button aria-label="Outputs"><svg><use href="#outConn"/></svg></button>
            <button class="on" aria-label="Construction history"><svg><use href="#history"/></svg></button>
            <span class="sep"></span>
            <button aria-label="Render view"><svg><use href="#renderView"/></svg></button>
            <button aria-label="Render frame"><svg><use href="#clap"/></svg></button>
            <button aria-label="IPR render"><svg><use href="#ipr"/></svg></button>
            <button aria-label="Render settings"><svg><use href="#rset"/></svg></button>
            <span class="sep"></span>
            <svg class="tri"><use href="#tri"/></svg>
            <svg class="abs"><use href="#absXf"/></svg>
            <label for="inX">X:</label><input id="inX" type="text">
            <label for="inY">Y:</label><input id="inY" type="text">
            <label for="inZ">Z:</label><input id="inZ" type="text">
            <div class="status-right">
                <button class="on" aria-label="Attribute editor"><svg><use href="#attrEd"/></svg></button>
                <button aria-label="Tool settings"><svg><use href="#toolSet"/></svg></button>
                <button class="on" aria-label="Channel box"><svg><use href="#chanBox"/></svg></button>
            </div>
        </div>

        <!-- Shelf -->
        <section class="shelf">
            <span class="grip"></span>
            <div class="shelf-side"><i></i><svg><use href="#tri"/></svg></div>
            <div class="shelf-main">
                <div class="tabs">
                    <button>General</button><button>Curves</button><button>Surfaces</button><button class="active">Polygons</button><button>Subdivs</button><button>Deformation</button><button>Animation</button><button>Dynamics</button><button>Rendering</button><button>PaintEffects</button><button>Toon</button><button>Muscle</button><button>Fluids</button><button>Fur</button><button>Hair</button><button>nCloth</button><button>Custom</button>
                    <svg class="trash"><use href="#trash"/></svg>
                </div>
                <div class="shelf-items">
                    <button aria-label="Sphere"><svg><use href="#pSphere"/></svg></button>
                    <button aria-label="Cube"><svg><use href="#pCube"/></svg></button>
                    <button aria-label="Cylinder"><svg><use href="#pCyl"/></svg></button>
                    <button aria-label="Cone"><svg><use href="#pCone"/></svg></button>
                    <button aria-label="Plane"><svg><use href="#pPlane"/></svg></button>
                    <button aria-label="Torus"><svg><use href="#pTorus"/></svg></button>
                    <button aria-label="Pyramid"><svg><use href="#pPyr"/></svg></button>
                    <button aria-label="Pipe"><svg><use href="#pPipe"/></svg></button>
                    <button aria-label="Combine"><svg><use href="#pStack"/></svg></button>
                    <button aria-label="Extract"><svg><use href="#pExtract"/></svg></button>
                    <button aria-label="Smooth"><svg><use href="#pSmooth"/></svg></button>
                    <button aria-label="Smooth proxy"><svg><use href="#pCubeSmooth"/></svg></button>
                    <button aria-label="Subdiv proxy"><svg><use href="#pPurple"/></svg></button>
                    <button aria-label="Triangulate"><svg><use href="#pTri"/></svg></button>
                    <button aria-label="Create polygon"><svg><use href="#pCreate"/></svg></button>
                    <button aria-label="Extrude"><svg><use href="#pExtrude"/></svg></button>
                    <button aria-label="Bridge"><svg><use href="#pBridge"/></svg></button>
                    <button aria-label="Bevel"><svg><use href="#pBevel"/></svg></button>
                    <button aria-label="Merge"><svg><use href="#pMerge"/></svg></button>
                    <button aria-label="Split polygon"><svg><use href="#pSplit"/></svg></button>
                    <button aria-label="Delete edge"><svg><use href="#pDelEdge"/></svg></button>
                    <button aria-label="Poke"><svg><use href="#pPoke"/></svg></button>
                    <button aria-label="Wedge"><svg><use href="#pWedge"/></svg></button>
                    <button aria-label="Duplicate face"><svg><use href="#pDup"/></svg></button>
                    <button aria-label="Sculpt"><svg><use href="#pSoft"/></svg></button>
                    <button aria-label="Planar mapping"><svg><use href="#uvPlanar"/></svg></button>
                    <button aria-label="Cylindrical mapping"><svg><use href="#uvCyl"/></svg></button>
                    <button aria-label="Spherical mapping"><svg><use href="#uvSph"/></svg></button>
                    <button aria-label="Automatic mapping"><svg><use href="#uvAuto"/></svg></button>
                    <button aria-label="UV texture editor"><svg><use href="#uvEditor"/></svg></button>
                    <button aria-label="Cut UVs"><svg><use href="#uvRoad"/></svg></button>
                    <div class="shelf-scroll">
                        <button aria-label="Scroll up"><svg viewBox="0 0 12 8"><path d="M2 6h8L6 2z" fill="#ccc"/></svg></button>
                        <button aria-label="Scroll down"><svg viewBox="0 0 12 8"><path d="M2 2h8L6 6z" fill="#ccc"/></svg></button>
                    </div>
                </div>
            </div>
        </section>

        <main class="workspace">
            <!-- Toolbox -->
            <aside class="toolbox">
                <span class="grip-h"></span>
                <div class="tools">
                    <button class="active" aria-label="Select"><svg><use href="#tSelect"/></svg></button>
                    <button aria-label="Lasso"><svg><use href="#tLasso"/></svg></button>
                    <button aria-label="Paint select"><svg><use href="#tPaint"/></svg></button>
                    <button aria-label="Move"><svg><use href="#tMove"/></svg></button>
                    <button aria-label="Rotate"><svg><use href="#tRotate"/></svg></button>
                    <button aria-label="Scale"><svg><use href="#tScale"/></svg></button>
                    <button aria-label="Universal manipulator"><svg><use href="#tUniv"/></svg></button>
                    <button aria-label="Soft modification"><svg><use href="#tSoft"/></svg></button>
                    <button aria-label="Show manipulator"><svg><use href="#tManip"/></svg></button>
                    <button aria-label="Last tool"><svg><use href="#tCurve"/></svg></button>
                </div>
                <div class="layouts">
                    <button aria-label="Single view"><svg class="lit wide"><use href="#lyBig"/></svg></button>
                    <button class="quad" aria-label="Four view"><svg class="lit"><use href="#lyCross"/></svg><svg class="lit"><use href="#lyGrid"/></svg><svg class="lit"><use href="#lyCross"/></svg><svg class="lit"><use href="#lyCross"/></svg></button>
                    <button class="split" aria-label="Persp and outliner"><svg><use href="#lyOut"/></svg><svg class="lit"><use href="#lyTall"/></svg></button>
                    <button class="stack" aria-label="Persp and graph"><svg class="lit"><use href="#lyGrid"/></svg><svg class="lit"><use href="#lyGraph"/></svg></button>
                    <button class="split" aria-label="Hypershade and persp"><svg><use href="#lyHyper"/></svg><svg class="lit"><use href="#lyTall"/></svg></button>
                    <button class="quad" aria-label="Persp, hypergraph and graph"><svg class="lit"><use href="#lyGrid"/></svg><svg><use href="#lyNodes"/></svg><svg class="lit span"><use href="#lyGraph"/></svg></button>
                    <button class="more" aria-label="More layouts"><svg viewBox="0 0 12 8"><path d="M2 2h8L6 6z" fill="#999"/></svg></button>
                </div>
                <button class="maya" aria-label="Maya home"><svg><use href="#mayaLogo"/></svg></button>
            </aside>

            <!-- Viewport -->
            <section class="panel">
                <nav class="menu panel-menu">
                    <a href="#">View</a><a href="#">Shading</a><a href="#">Lighting</a><a href="#">Show</a><a href="#">Renderer</a><a href="#">Panels</a>
                </nav>
                <div class="panel-tools">
                    <span class="sep"></span>
                    <button aria-label="Select camera"><svg><use href="#cam"/></svg></button>
                    <button aria-label="Camera attributes"><svg><use href="#camAttr"/></svg></button>
                    <button aria-label="Bookmarks"><svg><use href="#book"/></svg></button>
                    <button aria-label="Image plane"><svg><use href="#imgPlane"/></svg></button>
                    <button aria-label="Pan and zoom"><svg><use href="#panZoom"/></svg></button>
                    <span class="sep"></span>
                    <button class="on" aria-label="Grid"><svg><use href="#gridIc"/></svg></button>
                    <button aria-label="Film gate"><svg><use href="#film"/></svg></button>
                    <button aria-label="Resolution gate"><svg><use href="#resGate"/></svg></button>
                    <button aria-label="Gate mask"><svg><use href="#gateMask"/></svg></button>
                    <button aria-label="Field chart"><svg><use href="#fieldCh"/></svg></button>
                    <button aria-label="Safe action"><svg><use href="#safeAct"/></svg></button>
                    <button aria-label="Safe title"><svg><use href="#safeTitle"/></svg></button>
                    <span class="sep"></span>
                    <button class="on" aria-label="Wireframe"><svg><use href="#wire"/></svg></button>
                    <button aria-label="Smooth shade"><svg><use href="#shade"/></svg></button>
                    <button aria-label="Wireframe on shaded"><svg><use href="#shadeWire"/></svg></button>
                    <button aria-label="Textured"><svg><use href="#texd"/></svg></button>
                    <button aria-label="Use all lights"><svg><use href="#light"/></svg></button>
                    <button aria-label="Shadows"><svg><use href="#shadow"/></svg></button>
                    <button aria-label="High quality"><svg><use href="#hq"/></svg></button>
                    <span class="sep"></span>
                    <button aria-label="Isolate select"><svg><use href="#isolate"/></svg></button>
                    <span class="sep"></span>
                    <button class="dark" aria-label="X-ray"><svg><use href="#wire"/></svg></button>
                    <button class="dark" aria-label="X-ray active"><svg><use href="#xray"/></svg></button>
                    <button class="on" aria-label="X-ray joints"><svg><use href="#xjoint"/></svg></button>
                </div>
                <svg class="viewport" id="viewport" viewBox="0 0 1143 718" preserveAspectRatio="xMidYMid slice">
                    <g id="grid"></g>
                    <g class="view-axis">
                        <path d="M31 691V680" stroke="#30e030"/>
                        <path d="M31 691l16 2" stroke="#e02020"/>
                        <text x="26" y="676" fill="#20e020">y</text>
                        <text x="44" y="692" fill="#e81818">x</text>
                        <text x="22" y="699" fill="#1818e0">z</text>
                    </g>
                    <text class="cam-name" x="545" y="708">persp</text>
                    <path d="M711 394v18l4-4 4 8 4-2-4-7h6z" fill="#fff" stroke="#333"/>
                </svg>
            </section>

            <!-- Channel box and layer editor -->
            <aside class="channel">
                <div class="dock-title">
                    <span class="grip-h"></span>
                    <h2>Channel Box / Layer Editor</h2>
                    <span class="grip-h"></span>
                    <button aria-label="Float"><svg><use href="#restore"/></svg></button>
                    <button aria-label="Close panel"><svg><use href="#close"/></svg></button>
                </div>
                <div class="channel-icons">
                    <svg><use href="#axis"/></svg><svg><use href="#half"/></svg><svg><use href="#slant"/></svg>
                </div>
                <nav class="menu channel-menu"><a href="#">Channels</a><a href="#">Edit</a><a href="#">Object</a><a href="#">Show</a></nav>
                <div class="channel-list"></div>
                <span class="grip-h split-grip"></span>
                <div class="tabs layer-tabs"><button class="active">Display</button><button>Render</button><button>Anim</button></div>
                <div class="layers">
                    <nav class="menu layer-menu"><a href="#">Layers</a><a href="#">Options</a><a href="#">Help</a></nav>
                    <div class="layer-icons">
                        <button aria-label="Move layer up"><svg><use href="#layUp"/></svg></button>
                        <button aria-label="Move layer down"><svg><use href="#layDown"/></svg></button>
                        <button aria-label="New empty layer"><svg><use href="#layNew"/></svg></button>
                        <button aria-label="New layer from selected"><svg><use href="#layObj"/></svg></button>
                    </div>
                    <div class="layer-list"></div>
                    <div class="scrollbar">
                        <button aria-label="Scroll left"><svg viewBox="0 0 8 8"><path d="M6 0v8L1 4z" fill="#ccc"/></svg></button>
                        <div class="thumb"><i></i></div>
                        <button class="push" aria-label="Scroll left"><svg viewBox="0 0 8 8"><path d="M6 0v8L1 4z" fill="#ccc"/></svg></button>
                        <button aria-label="Scroll right"><svg viewBox="0 0 8 8"><path d="M2 0v8l5-4z" fill="#ccc"/></svg></button>
                    </div>
                </div>
            </aside>
            <div class="side-tabs">
                <button>Attribute Editor</button>
                <button class="active">Channel Box / Layer Editor</button>
            </div>
        </main>

        <!-- Time slider -->
        <div class="row time-row">
            <span class="grip"></span>
            <div class="timeline" id="timeline"></div>
            <input class="field" type="text" value="1.00" aria-label="Current time">
            <div class="transport">
                <button aria-label="Go to start"><svg><use href="#toStart"/></svg></button>
                <button aria-label="Step back"><svg><use href="#stepBack"/></svg></button>
                <button aria-label="Previous key"><svg><use href="#keyBack"/></svg></button>
                <button aria-label="Play backwards"><svg><use href="#playBack"/></svg></button>
                <button class="flip" aria-label="Play forwards"><svg><use href="#playBack"/></svg></button>
                <button class="flip" aria-label="Next key"><svg><use href="#keyBack"/></svg></button>
                <button class="flip" aria-label="Step forward"><svg><use href="#stepBack"/></svg></button>
                <button class="flip" aria-label="Go to end"><svg><use href="#toStart"/></svg></button>
            </div>
        </div>

        <!-- Range slider -->
        <div class="row range-row">
            <span class="grip"></span>
            <div class="range-start">
                <input class="field" type="text" value="1.00" aria-label="Animation start">
                <input class="field" type="text" value="1.00" aria-label="Playback start">
            </div>
            <div class="range"><div class="range-thumb"><span>1</span><span>24</span></div></div>
            <input class="field" type="text" value="24.00" aria-label="Playback end">
            <input class="field" type="text" value="48.00" aria-label="Animation end">
            <svg class="tri"><use href="#tri"/></svg>
            <select class="field set" aria-label="Animation layer"><option>No Anim Layer</option></select>
            <svg class="tri"><use href="#tri"/></svg>
            <select class="field set" aria-label="Character set"><option>No Character Set</option></select>
            <button class="key" aria-label="Auto keyframe"><svg><use href="#keyMark"/></svg></button>
            <button class="small" aria-label="Preferences"><svg><use href="#prefs"/></svg></button>
        </div>

        <!-- Command line -->
        <div class="row cmd-row">
            <span class="grip"></span>
            <label for="mel">MEL</label>
            <input id="mel" type="text">
            <output class="result"></output>
            <button class="small" aria-label="Script editor"><svg><use href="#script"/></svg></button>
        </div>

        <div class="row help-row">
            <span class="grip"></span>
            <p>Select Tool: select an object</p>
        </div>

        <!-- Channel logo and lesson name -->
        <div class="brand">
            <svg viewBox="0 0 72 56"><path d="M66 9C58-2 34 4 18 20 0 38 0 56 20 53c8-1 16-5 22-10-14 6-26 5-26-4C16 24 46 2 66 9z" fill="#c8202a"/><path d="M42 12c20-3 20 9 8 21-14 15-36 18-36 5 0-3 1-6 3-8 1 6 8 9 20 2 12-8 16-15 5-20z" fill="#1a6fb0"/></svg>
            <div><b>火星网</b><em>hxsd.com</em></div>
        </div>
        <div class="lesson">Maya角色绑定火星课堂</div>
    </div>

    <script>
        const SVG_NS = "http://www.w3.org/2000/svg";
        const GRID = 12;

        // Ground plane point -> screen point of the persp camera
        function project(x, z) {
            const w = 1 - 0.006584 * x - 0.02683 * z;
            return [
                (34.94 * x - 24.69 * z + 582.5) / w,
                (3.02 * x + 12.07 * z + 383.7) / w
            ];
        }

        function drawLine(parent, a, b, className) {
            const line = document.createElementNS(SVG_NS, "line");
            line.setAttribute("x1", a[0]);
            line.setAttribute("y1", a[1]);
            line.setAttribute("x2", b[0]);
            line.setAttribute("y2", b[1]);
            line.setAttribute("class", className);
            parent.appendChild(line);
        }

        function drawGrid() {
            const grid = document.getElementById("grid");
            for (let i = -GRID; i <= GRID; i++) {
                if (i === 0) continue;
                drawLine(grid, project(i, -GRID), project(i, GRID), "grid-line");
                drawLine(grid, project(-GRID, i), project(GRID, i), "grid-line");
            }
            drawLine(grid, project(0, -GRID), project(0, GRID), "grid-axis");
            drawLine(grid, project(-GRID, 0), project(GRID, 0), "grid-axis");
        }

        function drawTimeline() {
            const timeline = document.getElementById("timeline");
            for (let frame = 1; frame <= 24; frame++) {
                const cell = document.createElement("span");
                if (frame === 1) {
                    cell.className = "current";
                    cell.textContent = frame;
                } else if (frame % 2 === 0) {
                    cell.className = "tick";
                    cell.textContent = frame;
                }
                timeline.appendChild(cell);
            }
        }

        drawGrid();
        drawTimeline();
    </script>
</body>

</html>
```

FILE: styles.css
```css
* {
    box-sizing: border-box;
}

body {
    margin: 0;
    background-color: #000;
    color: #c8c8c8;
    font-family: "DejaVu Sans Condensed", "Noto Sans", "Noto Sans CJK SC", sans-serif;
    font-size: 12px;
    line-height: 16px;
}

button,
input,
select {
    font: inherit;
    color: inherit;
    margin: 0;
    padding: 0;
    border: 0;
    background: none;
}

svg {
    display: block;
}

.sprite {
    position: absolute;
    width: 0;
    height: 0;
}

.app {
    position: relative;
    display: flex;
    flex-direction: column;
    height: 100vh;
    margin: 0 182px;
    background-color: #444;
    overflow: hidden;
}

/* Title bar */
.title-bar {
    display: flex;
    align-items: center;
    height: 20px;
    flex: none;
    padding: 0 3px 0 5px;
    background: linear-gradient(90deg, #0c2a70, #a6caf0);
    border-bottom: 1px solid #d4dce4;
}

.app-icon {
    width: 14px;
    height: 15px;
}

.title-text {
    margin-left: 5px;
    color: #fff;
    font: bold 14px/18px "Liberation Mono", monospace;
}

.win-buttons {
    display: flex;
    margin-left: auto;
}

.win-buttons button {
    width: 18px;
    height: 15px;
    padding: 1px 2px;
    background-color: #d4d0c8;
    color: #000;
    border: 1px solid;
    border-color: #fff #404040 #404040 #fff;
}

.win-buttons svg {
    width: 12px;
    height: 11px;
}

.win-buttons .win-close {
    margin-left: 3px;
}

/* Menus */
.menu {
    display: flex;
    align-items: center;
    flex: none;
}

.menu a {
    padding: 0 9px;
    color: inherit;
    text-decoration: none;
    white-space: nowrap;
}

.main-menu {
    gap: 1px;
    height: 21px;
    padding-top: 2px;
    border-bottom: 1px solid #2e2e2e;
}

/* Drag handles */
.grip {
    flex: none;
    align-self: stretch;
    width: 8px;
    margin: 4px 4px 4px 4px;
    background: repeating-linear-gradient(45deg, #3c3c3c 0 2px, #484848 2px 4px);
}

.grip-h {
    display: block;
    height: 5px;
    background: repeating-linear-gradient(135deg, #3a3a3a 0 2px, #4a4a4a 2px 5px);
}

.sep {
    flex: none;
    width: 4px;
    height: 22px;
    margin: 0 4px;
    border: 1px solid #303030;
    border-right-color: #666;
    border-radius: 2px;
}

/* Status line */
.status-line {
    display: flex;
    align-items: center;
    flex: none;
    height: 35px;
    padding-right: 4px;
    border-bottom: 1px solid #333;
}

.combo {
    display: flex;
    align-items: center;
    width: 113px;
    height: 20px;
    margin-bottom: 6px;
    background: linear-gradient(#636363, #525252);
    border: 1px solid #383838;
    border-radius: 2px;
}

.combo select {
    flex: 1;
    padding-left: 4px;
    appearance: none;
}

.combo svg {
    box-sizing: content-box;
    width: 9px;
    height: 8px;
    padding: 0 4px;
    border-left: 1px solid #444;
}

.status-line button {
    flex: none;
    display: flex;
    align-items: center;
    justify-content: center;
    width: 29px;
    height: 27px;
    margin: 0 1px;
}

.status-line button svg {
    width: 22px;
    height: 22px;
}

.status-line button.narrow {
    width: 21px;
}

.status-line .on {
    background-color: #505254;
    border: 1px solid #323232;
    border-radius: 3px;
}

.tri {
    flex: none;
    width: 10px;
    height: 7px;
}

.abs {
    width: 22px;
    height: 22px;
    margin: 0 6px 0 5px;
}

.status-line label {
    width: 17px;
}

.status-line input {
    width: 44px;
    height: 25px;
    padding: 0 4px;
    background-color: #2a2a2a;
    border-radius: 2px;
}

.status-right {
    display: flex;
    margin-left: auto;
}

/* Shelf */
.shelf {
    display: flex;
    flex: none;
    height: 76px;
    border-bottom: 1px solid #303030;
}

.shelf-side {
    display: flex;
    flex-direction: column;
    align-items: center;
    justify-content: flex-end;
    gap: 4px;
    width: 26px;
    margin: 4px 3px 2px 0;
    padding-bottom: 7px;
    border: 1px solid #303030;
    border-right-color: #666;
}

.shelf-side i {
    width: 14px;
    height: 9px;
    background-color: #777;
}

.shelf-side svg {
    width: 24px;
    height: 12px;
    padding: 4px 6px 0;
    border-top: 1px solid #999;
}

.shelf-main {
    flex: 1;
    display: flex;
    flex-direction: column;
    margin-right: 8px;
    min-width: 0;
}

.tabs {
    display: flex;
    align-items: flex-end;
    flex: none;
}

.tabs button {
    height: 19px;
    padding: 0 14px;
    background-color: #404040;
    border: 1px solid #333;
    border-left: 0;
    white-space: nowrap;
}

.tabs .active {
    height: 22px;
    background-color: #666;
    border-color: #666;
    border-radius: 3px 3px 0 0;
}

.shelf .tabs {
    height: 26px;
}

.shelf .tabs button {
    padding: 0 15px;
    margin-right: 1px;
}

.trash {
    width: 14px;
    height: 18px;
    margin: 0 1px 3px auto;
}

.shelf-items {
    display: flex;
    align-items: center;
    height: 46px;
    margin-top: 1px;
    padding: 0 2px 0 3px;
    border: 2px solid #333;
    border-top-color: #2e2e2e;
    box-shadow: 0 -1px #5c5c5c;
}

.shelf-items > button {
    flex: none;
    width: 41px;
    height: 34px;
    padding-left: 4px;
}

.shelf-items > button svg {
    width: 32px;
    height: 32px;
}

.shelf-scroll {
    display: flex;
    flex-direction: column;
    gap: 2px;
    margin-left: auto;
}

.shelf-scroll button {
    width: 16px;
    height: 15px;
    padding: 3px 2px;
    background-color: #636363;
    border-radius: 2px;
}

.shelf-scroll svg {
    width: 12px;
    height: 8px;
}

/* Main area */
.workspace {
    display: flex;
    flex: 1;
    min-height: 0;
    padding: 3px 0 2px;
}

.toolbox {
    display: flex;
    flex-direction: column;
    flex: none;
    width: 54px;
    padding: 4px 7px 4px 4px;
}

.toolbox > .grip-h {
    margin: 2px 0 3px;
    flex: none;
}

.tools {
    display: flex;
    flex-direction: column;
    gap: 2px;
}

.tools button {
    width: 42px;
    height: 37px;
    padding: 2px 4px;
    border: 1px solid #5c5c5c;
    border-radius: 2px;
    box-shadow: 0 0 0 1px #333;
}

.tools svg {
    width: 32px;
    height: 31px;
}

.tools .active {
    background-color: #929292;
}

.layouts {
    display: flex;
    flex-direction: column;
    gap: 6px;
    margin: 15px 2px 0;
}

.layouts button {
    width: 39px;
    height: 34px;
    background-color: #2e2e2e;
}

.layouts svg {
    width: 100%;
    height: 100%;
}

.layouts .lit {
    background: linear-gradient(#eee, #b8b8b8);
}

.layouts .quad {
    display: grid;
    grid-template: 16px 16px / 19px 19px;
    gap: 1px;
}

.layouts .split {
    display: grid;
    grid-template: 34px / 19px 19px;
    gap: 1px;
}

.layouts .stack {
    display: grid;
    grid-template: 16px 17px / 39px;
    gap: 1px;
}

.layouts .span {
    grid-column: 1 / 3;
}

.layouts .more {
    display: flex;
    align-items: center;
    width: 37px;
    background-color: #424242;
    border: 1px solid #303030;
}

.layouts .more svg {
    height: 6px;
}

.maya {
    width: 36px;
    height: 34px;
    margin: auto auto 0 4px;
    padding: 2px;
    background-color: #2c2c2c;
    border: 1px solid #222;
    border-radius: 4px;
}

.maya svg {
    width: 30px;
    height: 28px;
}

.panel {
    flex: 1;
    display: flex;
    flex-direction: column;
    min-width: 0;
    border: 1px solid #606060;
    border-bottom: 0;
}

.panel-menu {
    height: 20px;
}

.panel-tools {
    display: flex;
    align-items: center;
    flex: none;
    height: 22px;
}

.panel-tools .sep {
    height: 12px;
    margin: 0 6px;
}

.panel-tools .sep:first-child {
    margin: 0 5px 0 2px;
}

.panel-tools button {
    flex: none;
    width: 23px;
    height: 19px;
    padding: 0 2px;
}

.panel-tools svg {
    width: 19px;
    height: 19px;
}

.panel-tools .on {
    background-color: #4c545c;
}

.panel-tools .dark {
    background-color: #333;
}

.viewport {
    flex: 1;
    width: 100%;
    min-height: 0;
    background-color: #9c9c9c;
}

.grid-line {
    stroke: #808080;
    stroke-width: 1;
}

.grid-axis {
    stroke: #000;
    stroke-width: 2;
}

.view-axis {
    font: bold 16px "Liberation Serif", serif;
    stroke-width: 1;
}

.cam-name {
    fill: #0c5028;
    font: bold 13px "Liberation Mono", monospace;
}

/* Channel box */
.channel {
    display: flex;
    flex-direction: column;
    flex: none;
    width: 263px;
    margin: 0 3px 0 10px;
}

.dock-title {
    display: flex;
    align-items: center;
    gap: 6px;
    height: 19px;
}

.dock-title .grip-h {
    flex: 1;
}

.dock-title h2 {
    margin: 0 6px;
    font-size: 11px;
    font-weight: normal;
}

.dock-title button {
    width: 14px;
    height: 13px;
    margin-left: -2px;
    background-color: #5a5a5a;
    color: #111;
    border-radius: 2px;
}

.dock-title button svg {
    width: 12px;
    height: 12px;
    margin: 0 1px;
}

.channel-icons {
    display: flex;
    justify-content: flex-end;
    gap: 6px;
    height: 23px;
    padding: 2px 3px;
}

.channel-icons svg {
    width: 18px;
    height: 18px;
}

.channel-menu {
    height: 23px;
}

.channel-list {
    flex: 1;
    background-color: #2a2a2a;
    border: 2px solid #383838;
    border-top-color: #606060;
}

.split-grip {
    width: 88px;
    height: 4px;
    margin: 4px auto 5px;
}

.layer-tabs button {
    padding: 0 15px;
}

.layers {
    border: 1px solid #333;
    padding: 3px 4px 6px;
}

.layer-menu a:first-child {
    padding-left: 6px;
}

.layer-icons {
    display: flex;
    justify-content: flex-end;
    gap: 8px;
    height: 31px;
    padding: 7px 4px;
}

.layer-icons svg {
    width: 21px;
    height: 17px;
}

.layer-list {
    height: 111px;
    background-color: #2a2a2a;
}

.scrollbar {
    display: flex;
    gap: 2px;
    height: 16px;
    padding: 0 6px 0 3px;
    background-color: #333;
}

.scrollbar button {
    width: 16px;
    padding: 4px;
    background-color: #626262;
    border-radius: 2px;
}

.scrollbar svg {
    width: 8px;
    height: 8px;
}

.scrollbar .push {
    margin-left: auto;
}

.thumb {
    display: flex;
    align-items: center;
    justify-content: center;
    width: 113px;
    background: linear-gradient(#6c6c6c, #5a5a5a);
}

.thumb i {
    width: 24px;
    height: 10px;
    background: radial-gradient(circle, #333 1px, transparent 1px) 0 0 / 4px 4px;
}

.side-tabs {
    display: flex;
    flex-direction: column;
    flex: none;
    width: 25px;
}

.side-tabs button {
    writing-mode: vertical-rl;
    width: 22px;
    padding: 12px 2px 15px;
    border: 1px solid #2e2e2e;
    font-size: 11px;
    text-align: left;
}

.side-tabs .active {
    width: 24px;
    background-color: #636363;
    border-color: #636363;
}

/* Bottom rows */
.row {
    display: flex;
    align-items: center;
    flex: none;
    border-top: 1px solid #303030;
    box-shadow: inset 0 1px #4e4e4e;
}

.time-row {
    height: 38px;
}

.range-row {
    height: 31px;
}

.cmd-row {
    height: 32px;
}

.help-row {
    height: 29px;
}

.timeline {
    display: flex;
    flex: 1;
    height: 31px;
    padding-left: 5px;
    background-color: #6e6e6e;
    border-top: 1px solid #333;
    color: #111;
}

.timeline span {
    flex: 1 1 0;
    min-width: 0;
}

.timeline .current {
    padding-top: 12px;
    text-indent: 9px;
    background-color: #5a5a5a;
    color: #eee;
}

.timeline .tick {
    text-indent: 7px;
    line-height: 12px;
    background: linear-gradient(#000, #000) 0 100% / 2px 16px no-repeat;
}

.field {
    width: 78px;
    height: 19px;
    padding: 0 4px;
    background-color: #2a2a2a;
    border-radius: 2px;
}

.time-row .field {
    margin-left: 6px;
}

.transport {
    display: flex;
    gap: 11px;
    margin: 0 8px 0 8px;
}

.transport button {
    width: 22px;
    height: 16px;
}

.transport svg {
    width: 20px;
    height: 15px;
}

.flip {
    transform: scaleX(-1);
}

.range-start {
    display: flex;
    width: 164px;
    background-color: #2a2a2a;
}

.range-start .field {
    width: 84px;
}

.range {
    flex: 1;
    height: 21px;
    margin-left: 4px;
    padding: 2px 4px;
    background-color: #262626;
}

.range-thumb {
    display: flex;
    justify-content: space-between;
    width: 51%;
    height: 18px;
    padding: 0 23px;
    background-color: #646464;
    border-radius: 2px;
}

.range-thumb span:first-child {
    border-left: 1px solid #333;
    margin-left: -6px;
    padding-left: 5px;
    height: 12px;
}

.range-row > .field {
    margin-left: 5px;
}

.range-row .tri {
    margin: 0 5px 0 9px;
}

.range-row .set {
    width: 116px;
    appearance: none;
}

.key {
    margin-left: 3px;
}

.key svg {
    width: 26px;
    height: 15px;
}

.small {
    margin: 0 6px 0 3px;
}

.small svg {
    width: 17px;
    height: 15px;
}

.cmd-row label {
    width: 51px;
    padding-left: 12px;
}

.cmd-row input {
    flex: 1;
    height: 25px;
    padding: 0 4px;
    background-color: #2a2a2a;
}

.result {
    flex: 1;
    height: 25px;
    margin-left: 8px;
    background-color: #000;
}

.help-row p {
    flex: 1;
    margin: 3px 4px 0 0;
    padding: 4px 12px 2px;
    border: 1px solid #333;
    font-size: 11px;
}

/* Overlaid channel logo and lesson name */
.brand {
    position: absolute;
    left: 35px;
    bottom: 28px;
    display: flex;
    align-items: flex-end;
    opacity: 0.75;
    color: #d81820;
}

.brand svg {
    width: 72px;
    height: 58px;
}

.brand div {
    display: flex;
    flex-direction: column;
    margin-left: -6px;
}

.brand b {
    padding-left: 4px;
    font: italic 900 30px/26px "Noto Sans CJK SC", sans-serif;
}

.brand em {
    font: italic bold 22px/20px "DejaVu Sans", sans-serif;
}

.lesson {
    position: absolute;
    right: 43px;
    bottom: 32px;
    color: rgba(215, 0, 0, 0.7);
    font: 36px/46px "Noto Sans CJK SC", sans-serif;
}
```
